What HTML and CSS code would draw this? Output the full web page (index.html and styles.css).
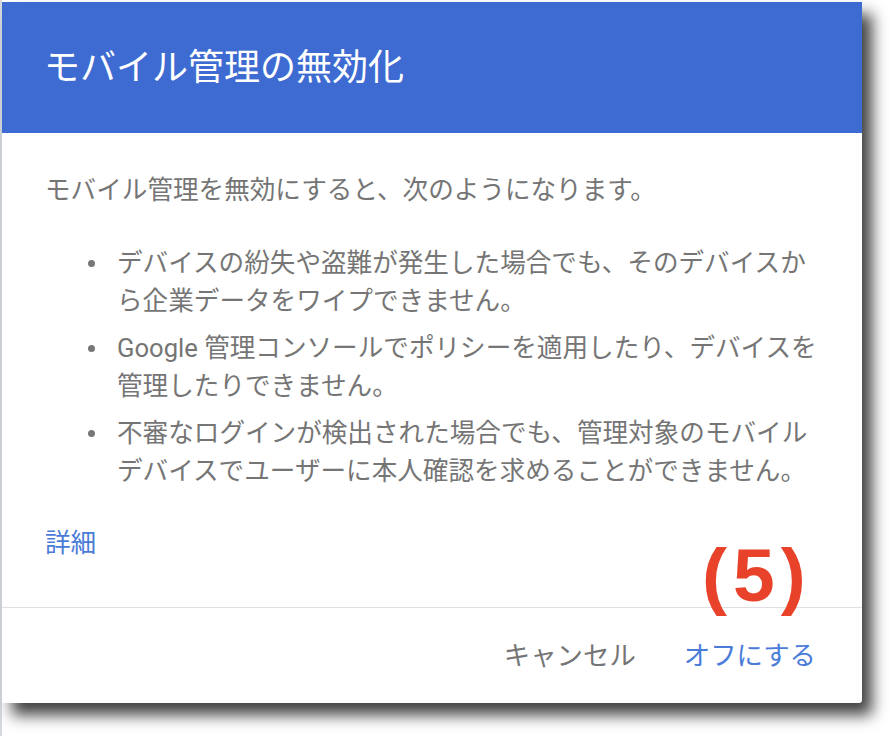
FILE: index.html
```html
<!DOCTYPE html>
<html lang="ja">
<head>
  <meta charset="UTF-8" />
  <meta name="viewport" content="width=device-width, initial-scale=1.0"/>
  <title>モバイル管理の無効化</title>
  <link rel="stylesheet" href="styles.css">
</head>
<body>
  <div class="page">
    <div class="dialog">
      <header class="dialog-header">
        <h1>モバイル管理の無効化</h1>
      </header>

      <div class="dialog-body">
        <p>モバイル管理を無効にすると、次のようになります。</p>
        <ul>
          <li>デバイスの紛失や盗難が発生した場合でも、そのデバイスから企業データをワイプできません。</li>
          <li>Google 管理コンソールでポリシーを適用したり、デバイスを管理したりできません。</li>
          <li>不審なログインが検出された場合でも、管理対象のモバイルデバイスでユーザーに本人確認を求めることができません。</li>
        </ul>
        <a href="#" class="more-link">詳細</a>
      </div>

      <div class="dialog-footer">
        <button class="btn">キャンセル</button>
        <button class="btn primary">オフにする</button>
      </div>

      <span class="step-label">(5)</span>
    </div>
  </div>
</body>
</html>
```

FILE: styles.css
```css
body {
  margin: 0;
  padding: 0;
  background: #fff;
  font-family: Roboto, "Noto Sans CJK JP", sans-serif;
}
.page {
  min-height: 736px;
  border-left: 2px solid #d6dade;
  padding-top: 2px;
  box-sizing: border-box;
}
.dialog {
  position: relative;
  width: 860px;
  background: #fff;
  border-radius: 0 0 3px 0;
  box-shadow: 10px 12px 15px rgba(0, 0, 0, 0.75);
}
.dialog-header {
  background-color: #3d6bd1;
  height: 131px;
  display: flex;
  align-items: center;
  padding: 0 42px;
}
.dialog-header h1 {
  margin: 0 0 8px;
  color: #fff;
  font-size: 36px;
  font-weight: 400;
}
.dialog-body {
  padding: 38px 32px 45px 43px;
  color: #757575;
  font-size: 25.6px;
  line-height: 38.5px;
}
.dialog-body p {
  margin: 0 0 34px;
}
.dialog-body ul {
  list-style: none;
  margin: 0 0 33px;
  padding-left: 72px;
}
.dialog-body li {
  position: relative;
  margin-bottom: 8px;
}
.dialog-body li:last-child {
  margin-bottom: 0;
}
.dialog-body li::before {
  content: "";
  position: absolute;
  left: -29px;
  top: 16px;
  width: 7px;
  height: 7px;
  border-radius: 50%;
  background: #777;
}
.more-link {
  color: #4a7bd9;
  text-decoration: none;
}
.dialog-footer {
  border-top: 1px solid #e0e0e0;
  height: 96px;
  display: flex;
  justify-content: flex-end;
  align-items: center;
  gap: 48px;
  padding: 0 46px 4px 0;
  box-sizing: border-box;
}
.btn {
  background: none;
  border: none;
  padding: 0;
  font-family: inherit;
  font-size: 26.4px;
  color: #757575;
  cursor: pointer;
}
.btn.primary {
  color: #4a7bd9;
}
.step-label {
  position: absolute;
  left: 700px;
  top: 530px;
  color: #e8432a;
  font-family: "Liberation Sans", Arial, sans-serif;
  font-weight: 700;
  font-size: 75px;
  letter-spacing: 6px;
}
```
